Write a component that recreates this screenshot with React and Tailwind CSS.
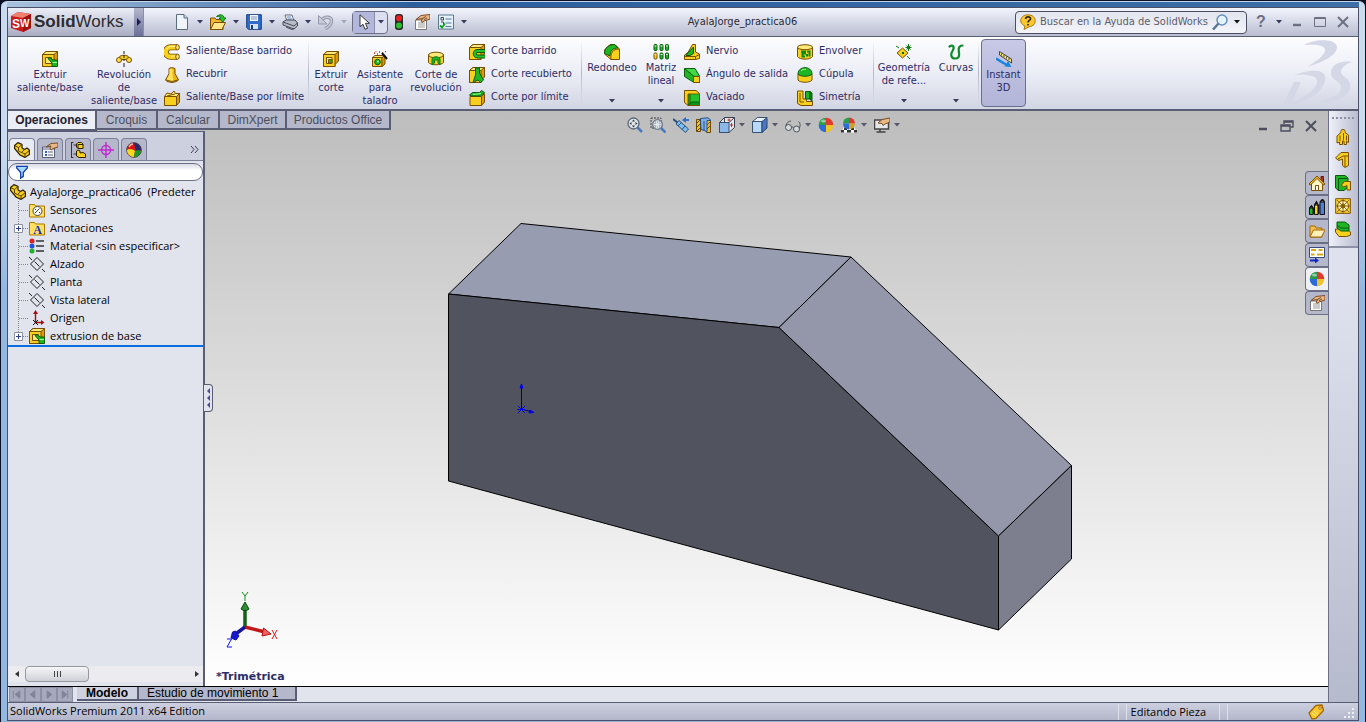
import React, { useState } from "react";

const OUT = "#7a4e00";
const YEL = "#f7cf1d";
const GRN = "#1fb524";

const Svg = ({ size = 16, box = 16, children, ...rest }) => (
  <svg width={size} height={size} viewBox={`0 0 ${box} ${box}`} fill="none" className="shrink-0" aria-hidden="true" {...rest}>
    {children}
  </svg>
);

/* yellow block used as the base of most feature icons */
const Block = () => (
  <>
    <path d="M.5 3.500 4 .5h11.500v9.500l-3.500 3.500V15.500H.5z" fill="#d99b08" stroke={OUT} />
    <path d="M.5 3.500 4 .5h11.500L12 3.500z" fill="#ffe978" stroke={OUT} />
    <path d="M.5 3.500h11.500v12H.5z" fill={YEL} stroke={OUT} />
  </>
);

const icons = {
  extrude: (
    <Svg>
      <Block />
      <path d="M3.500 6.500h6v6h-6z" fill="#ffe978" stroke={OUT} />
      <path d="m6 7.500 2-1 3 2.500h4.500v6.500H10V12z" fill={GRN} stroke="#0b5a10" />
      <path d="M10.500 11.500h4.500" stroke="#9dff90" />
    </Svg>
  ),
  revolve: (
    <Svg>
      <path d="M8 0v3M8 12v4" stroke="#222" />
      <path d="M3 6.500c1-3 9-3 10 0l-1 3c-1-1.500-7-1.500-8 0z" fill={YEL} stroke={OUT} />
      <circle cx="3" cy="9" r="2.500" fill="#ffdf50" stroke={OUT} />
      <circle cx="13" cy="9" r="2.500" fill="#ffdf50" stroke={OUT} />
      <path d="M8 4v6" stroke="#222" strokeDasharray="3 1" />
    </Svg>
  ),
  sweep: (
    <Svg>
      <path d="M13 3.300H6.500a4.700 4.700 0 0 0 0 9.400H13" stroke={OUT} strokeWidth="6" />
      <path d="M13 3.300H6.500a4.700 4.700 0 0 0 0 9.400H13" stroke={YEL} strokeWidth="4.400" />
      <path d="M12 2.500H6.500a5.500 5.500 0 0 0-4 2.500M7 12h5" stroke="#fff3a0" />
      <ellipse cx="13.500" cy="3.300" rx="1.800" ry="2.600" fill="#ffe978" stroke={OUT} />
      <ellipse cx="13.500" cy="12.700" rx="1.800" ry="2.600" fill="#ffe978" stroke={OUT} />
    </Svg>
  ),
  loft: (
    <Svg>
      <path d="M5 1.500 7.500.5 11 1.500v5l3.500 6.500-2 1.500-4.500 1-5-1L1.500 13 5 6.500z" fill="#e9b60f" stroke={OUT} />
      <path d="M5.500 2h3v5l1 7.500L3 13.500 2.500 13 5.500 7z" fill="#ffe25a" />
      <path d="m2 13 6 1.500 6-1.500" stroke={OUT} />
    </Svg>
  ),
  boundary: (
    <Svg>
      <path d="M.5 6.500h12v9H.5z" fill={YEL} stroke={OUT} />
      <path d="m12.500 6.500 3-3v8.500l-3 3.500z" fill="#d99b08" stroke={OUT} />
      <path d="M.5 6.500 3 3l4 1 3-3 1.500 2.500h4l-3 3z" fill="#ffe978" stroke={OUT} />
      <path d="m3 6 8-2" stroke={OUT} />
    </Svg>
  ),
  cutExtrude: (
    <Svg>
      <Block />
      <path d="M3.500 6.500h5.500v6H3.500z" fill="#fff0a0" stroke={OUT} />
      <path d="M5.500 8.500H9v3.500H5.500z" fill={GRN} stroke={OUT} />
    </Svg>
  ),
  hole: (
    <Svg>
      <path d="M.5 6.500h9.500v9H.5z" fill={YEL} stroke={OUT} />
      <path d="m10 6.500 3-2V13l-3 2.500z" fill="#d99b08" stroke={OUT} />
      <path d="m.5 6.500 2.500-2h10l-3 2z" fill="#ffe978" stroke={OUT} />
      <circle cx="5.500" cy="11" r="2.800" fill={GRN} stroke="#0b5a10" />
      <circle cx="6" cy="10.500" r="1" fill="#b8ffb0" />
      <path d="M2 2h1M5 3h1M7 1h1M10 2h1M13 .5h1M3.500 0h1" stroke="#e02010" strokeWidth="1.500" />
      <path d="m10 2 5 6" stroke="#111" strokeWidth="2" />
    </Svg>
  ),
  cutRevolve: (
    <Svg>
      <path d="M.5 4v7.500c2 3 13 3 15 0V4z" fill={YEL} stroke={OUT} />
      <ellipse cx="8" cy="4" rx="7.500" ry="2.800" fill="#ffe978" stroke={OUT} />
      <path d="M4 14V8c1-3 7-3 8 0v6l-2-2V9H6.500v3z" fill={GRN} stroke="#0b7a10" />
    </Svg>
  ),
  cutSweep: (
    <Svg>
      <Block />
      <path d="M16 7H8.500a2.700 2.700 0 0 0 0 5.500H16" stroke="#0b5a10" strokeWidth="4" />
      <path d="M16 7H8.500a2.700 2.700 0 0 0 0 5.500H16" stroke="#25c02a" strokeWidth="2" />
    </Svg>
  ),
  cutLoft: (
    <Svg>
      <Block />
      <path d="M6.500 1h4v5l4 7-3 2.500L9 13l-5 2.500L6.500 8z" fill={GRN} stroke="#0b5a10" />
    </Svg>
  ),
  cutBoundary: (
    <Svg>
      <path d="M1 6.500h11.500v9H1z" fill={YEL} stroke={OUT} />
      <path d="m12.500 6.500 3-3v8.500l-3 3.500z" fill="#d99b08" stroke={OUT} />
      <path d="m.5 5 3-2.500h7l2-2 3 2-4 3.500h-9z" fill={GRN} stroke="#0b5a10" />
      <path d="m4 4.500 8-1" stroke="#9dff90" />
    </Svg>
  ),
  fillet: (
    <Svg>
      <path d="M.5 6 6 .5h5l4.500 4.500v10.500H7L.5 10z" fill={YEL} stroke={OUT} />
      <path d="M.5 9.500C.5 4 5 .5 10.500.5l3.500 3.500C8.500 4 6 7 6 12z" fill={GRN} stroke="#0b5a10" />
      <path d="M7 15.500C6 9 9 5 15 5" stroke={OUT} />
    </Svg>
  ),
  pattern: (
    <Svg>
      {[2.5, 8.5, 14].map((x) =>
        [3.5, 12].map((y) => (
          <g key={x + "-" + y}>
            <rect x={x - 1.5} y={y - 3} width="3" height="6" rx="1" fill={x < 3 && y > 5 ? YEL : GRN} stroke={x < 3 && y > 5 ? OUT : "#0b5a10"} />
            <path d={`M${x - 1} ${y - 1.5}h2`} stroke="#d8ffd0" />
          </g>
        ))
      )}
    </Svg>
  ),
  rib: (
    <Svg>
      <path d="M8.500.5h3V8l4 2v4.500l-4 1H.5V11L4 8.500z" fill={YEL} stroke={OUT} />
      <path d="M9.500 3v6.500L6 11.500H2L4.500 8z" fill={GRN} stroke="#0b5a10" />
      <path d="M1 12.500h10.500l4-2M11.500 12.500v3" stroke={OUT} />
    </Svg>
  ),
  draft: (
    <Svg>
      <path d="M.5 1.500H11L15.500 9v6.500H10L.5 9.500z" fill={GRN} stroke="#0b5a10" />
      <path d="M1 2 10 9.500" stroke="#0b5a10" />
      <path d="M2 2h8.500l4 6.500H10z" fill="#46d848" />
      <path d="M9.500 9.500h6v6h-6z" fill={YEL} stroke={OUT} />
    </Svg>
  ),
  shell: (
    <Svg>
      <path d="M.5.5h11.500l3.500 3v12H4l-3.500-3z" fill={YEL} stroke={OUT} />
      <path d="M4 4h11.500v11.500H4z" fill="#0d9616" stroke={OUT} />
      <path d="M7 4.500h8V12H7z" fill="#27c22c" />
      <path d="m4.500 15 3-3H15" stroke="#0b5a10" />
    </Svg>
  ),
  wrap: (
    <Svg>
      <path d="M.5 3.500v9c2 3.500 13 3.500 15 0v-9z" fill={YEL} stroke={OUT} />
      <ellipse cx="8" cy="3.200" rx="7.500" ry="2.500" fill="#ffe978" stroke={OUT} />
      <path d="M4 7.500h4v2H5.500v3H8m2-5h2.500v5M10 10v2.500" stroke="#0d8a16" strokeWidth="2" />
    </Svg>
  ),
  dome: (
    <Svg>
      <path d="M1 7v6c2 3 12 3 14 0V7z" fill={YEL} stroke={OUT} />
      <path d="M1 7c0-8.500 14-8.500 14 0-2 3-12 3-14 0z" fill={GRN} stroke="#0b5a10" />
      <path d="M4 4c1-1.500 3-2 5-1.500" stroke="#9dff90" />
    </Svg>
  ),
  mirror: (
    <Svg>
      <path d="M.5 1H6v8h3.500v2.500h6v4H4l-3.500-2z" fill={YEL} stroke={OUT} />
      <path d="M3 3v9h4" stroke={OUT} />
      <path d="M8.500 1.500H13V9H8.500z" fill={GRN} stroke="#0b5a10" />
      <path d="M13 1.500 15 3v8.500L13 9z" fill="#0c8a14" stroke="#0b5a10" />
    </Svg>
  ),
  refGeo: (
    <Svg>
      <path d="m1 9 5.500-5L12 9l-5.500 5z" fill={YEL} stroke={OUT} />
      <path d="M6 8h2v2H6z" fill="#0b6a10" />
      <path d="m0 2 3 2M11 12l3 3M12.500 0v7M9.500 3.500h6M10.500 1.500l4 4M14.500 1.500l-4 4" stroke="#0b7a10" />
    </Svg>
  ),
  curves: (
    <Svg>
      <path d="M1.500 2.500C5 .5 7 3 4.500 7S3.500 14.500 7 14.500s4.500-2 4-5.500S10 2 14.500 1.500" stroke="#0c8a2c" strokeWidth="2.200" strokeLinecap="round" />
    </Svg>
  ),
  instant: (
    <Svg>
      <path d="M3.500.5 15.500 8v4L3.500 4z" fill="#f8e878" stroke="#444" />
      <path d="M5.500 2.500v2M8 4v2M10.500 5.500v2M13 7v2" stroke="#444" />
      <path d="m0 7.500 10 6" stroke="#1585e0" strokeWidth="2.500" />
      <path d="M15.500 16 8.500 15.500 12 10z" fill="#1585e0" />
    </Svg>
  ),
  part: (
    <Svg>
      <path d="M.6 3.500 4 .6 8 2.500V6l2.500 1.500L13 6l2.400 2v4.500L11 15.400 6 13 .6 6.500z" fill={YEL} stroke="#2c2000" strokeWidth="1.200" />
      <path d="M.6 3.500 4.500 5.500 8 2.500M4.500 5.500v3.500l3 1.500L10.500 7.500M7.500 10.500l3.500 1.500v3M11 12l4.400-3.500" stroke="#5a4000" />
    </Svg>
  ),
  props: (
    <Svg>
      <path d="M1.500 6h11v9.500h-11z" fill="#fcfcfc" stroke="#777" />
      <path d="M4 9h7M4 11h7M4 13h7" stroke="#999" />
      <path d="M2 5.500 7 1.500l9-1V5l-6 2-2 1.500L7 7l2-2.500z" fill="#e8b887" stroke="#7c4c24" />
      <path d="m9 4 3-1.500M10 5.500 13 4" stroke="#7c4c24" />
    </Svg>
  ),
  propTab: (
    <Svg>
      <path d="M.5 5h12v10.500H.5z" fill="#f6f8fc" stroke="#555e78" />
      <path d="M1 6h11v2H1z" fill="#a8b0c8" />
      <path d="M3 10h2M3 13h2" stroke="#2b62c8" strokeWidth="2" />
      <path d="M6 10h5M6 13h5" stroke="#666" />
      <path d="M4 5 9 1.500l7-.5v4l-5 1.500-2 1.500-1-2 1-2z" fill="#e8b887" stroke="#7c4c24" />
    </Svg>
  ),
  config: (
    <Svg>
      <path d="M1.500 0v16M3.500 3h3M3.500 12h3M1.500 .5h2M1.500 15.500h2" stroke="#333" />
      <path d="m6.500 2 1.500-1.500h3.500L13 2v4.500H8L6.500 5z" fill={YEL} stroke="#2c2000" />
      <path d="M8 2.500h5M8 2.500v4" stroke="#2c2000" />
      <path d="m6.500 9 1.500-1 2 1v2l3-.5 2.500 1.500v3.500H9l-2.500-1.500z" fill={YEL} stroke="#2c2000" />
    </Svg>
  ),
  dim: (
    <Svg>
      <circle cx="8" cy="8" r="4.500" stroke="#c02ad0" strokeWidth="1.400" />
      <path d="M8 0v16M0 8h16" stroke="#c02ad0" strokeWidth="1.400" />
    </Svg>
  ),
  displayBall: (
    <Svg>
      <circle cx="8" cy="8" r="7.300" fill="#d81414" stroke="#444" />
      <path d="M8 1a7 7 0 0 1 7 7l-5 1z" fill="#222a70" />
      <path d="M1 8c2-2 6-1 8 1l-1 6C4 15 1 12 1 8z" fill="#f8d820" />
      <path d="M9 9c2-1 4-1 6 0-1 4-4 6-7 6z" fill="#159a30" />
      <path d="M3 5c1-2 2-3 4-3" stroke="#ffb0a0" strokeWidth="1.500" />
    </Svg>
  ),
  ball: (
    <Svg>
      <path d="M8 8V.7A7.300 7.300 0 0 1 15.300 8z" fill="#e03a2c" />
      <path d="M8 8H.7A7.300 7.300 0 0 1 8 .7z" fill="#2a9c4c" />
      <path d="M8 8v7.300A7.300 7.300 0 0 1 .7 8z" fill="#2c6cd8" />
      <path d="M8 8h7.300A7.300 7.300 0 0 1 8 15.300z" fill="#f0c428" />
      <ellipse cx="5.500" cy="4" rx="2.500" ry="1.600" fill="#fff" opacity=".5" />
    </Svg>
  ),
  scene: (
    <Svg>
      <path d="M0 15.500h16L13 10H3z" fill="#fff" />
      <path d="M0 13h3v2.500H0zM6 13h4v2.500H6zM13 13h3v2.500h-3zM3 10.500h3V13H3zM10 10.500h3V13h-3z" fill="#333" />
      <path d="M8 6.500V.5a6 6 0 0 1 6 6z" fill="#e03a2c" />
      <path d="M8 6.500H2a6 6 0 0 1 6-6z" fill="#2a9c4c" />
      <path d="M8 6.500v6a6 6 0 0 1-6-6z" fill="#2c6cd8" />
      <path d="M8 6.500h6a6 6 0 0 1-6 6z" fill="#d0a428" />
    </Svg>
  ),
  filter: (
    <Svg size={14}>
      <path d="M2 1.500h12v2L9.500 8.500V13L6.500 15V8.500L2 3.500z" fill="#a8d8fc" stroke="#1240b0" strokeWidth="1.500" />
    </Svg>
  ),
  sensors: (
    <Svg>
      <path d="M.5 2.500h5l1 1.500h9v11H.5z" fill="#ffe060" stroke="#b07a00" />
      <circle cx="8.500" cy="9" r="4.500" fill="#fff" stroke="#444" />
      <path d="m6 11 4.500-4.500M6 8l1-1M10 11l1-1" stroke="#333" />
    </Svg>
  ),
  notes: (
    <Svg>
      <path d="M.5 2.500h5l1 1.500h9v11H.5z" fill="#ffe060" stroke="#b07a00" />
      <text x="8.500" y="14" textAnchor="middle" fontSize="12" fontWeight="700" fontFamily="Liberation Serif, serif" fill="#1230c0">A</text>
    </Svg>
  ),
  material: (
    <Svg>
      <circle cx="3" cy="3" r="2.500" fill="#e02020" />
      <circle cx="3" cy="8" r="2.500" fill="#2050e0" />
      <circle cx="3" cy="13" r="2.500" fill="#20b030" />
      <path d="M7 3h8M7 8h8M7 13h8" stroke="#333" strokeWidth="1.500" />
    </Svg>
  ),
  plane: (
    <Svg>
      <path d="M8 1.500 14.500 8 8 14.500 1.500 8zM0 1l3 3M13 13l3 3M5.500 5.500l5 5" stroke="#222" />
    </Svg>
  ),
  origin: (
    <Svg>
      <path d="M6.500 2v11M6 12.500h8" stroke="#a01010" strokeWidth="1.400" />
      <path d="m6.500 0 2.500 4H4zM15.500 12.500 12 10v5z" fill="#a01010" />
      <path d="m4 10 5 5M9 10l-5 5" stroke="#111" />
    </Svg>
  ),
  newDoc: (
    <Svg>
      <path d="M2.500.5h7.500l3.500 3.500v11.500h-11z" fill="#eef4fa" stroke="#5c6c80" />
      <path d="M10 .5V4h3.500" fill="#c8d4e0" stroke="#5c6c80" />
    </Svg>
  ),
  open: (
    <Svg>
      <path d="M.5 4h4.500l1 1.500h7v10H.5z" fill="#f0b830" stroke={OUT} />
      <path d="M.5 15.500 4 8.500h11.500L12 15.500z" fill="#ffe488" stroke={OUT} />
      <path d="M6.500 2.500C10-.5 14 1 14 4h2l-3.500 4L9 4h2c0-1.500-2-2-4.500-1.500z" fill="#2fc02f" stroke="#0b7a10" />
    </Svg>
  ),
  save: (
    <Svg>
      <path d="M.7.7h14.600v14.600H2.500L.7 13.500z" fill="#2e6cc8" stroke="#153c80" />
      <path d="M4 1h8v6H4z" fill="#f4f8fc" />
      <path d="M5 3h6M5 5h6" stroke="#7a94b8" />
      <path d="M4 10h8v5H4z" fill="#d8e0ec" />
      <path d="M5 11h2v4H5z" fill="#153c80" />
    </Svg>
  ),
  print: (
    <Svg>
      <path d="M3 1h7l2 6H5z" fill="#fff" stroke="#667" />
      <path d="M5 3h4M5.500 5H10" stroke="#5580c0" />
      <path d="m1 8 3-2h9l2.500 3v3L12 15l-11-4z" fill="#b8bcc8" stroke="#444a58" />
      <path d="m1 8 11 4 3.500-3M4 13l6 2.500 2-1" stroke="#444a58" />
    </Svg>
  ),
  undo: (
    <Svg>
      <path d="M2 7.500C7 1 14 2.500 13.500 7.500 13 11 10.500 13 7 15" stroke="#9498a8" strokeWidth="3.500" />
      <path d="M2 7.500C7 1 14 2.500 13.500 7.500 13 11 10.500 13 7 15" stroke="#c8ccd8" strokeWidth="1.500" />
      <path d="M.5 1.500v8.500H9z" fill="#c8ccd8" stroke="#9498a8" />
    </Svg>
  ),
  pointer: (
    <Svg>
      <path d="M4 .8v12l3-2.500 2 5 2.500-1-2-5h4z" fill="#fff" stroke="#333" />
    </Svg>
  ),
  traffic: (
    <Svg>
      <rect x="4" y="0" width="8" height="16" rx="3" fill="#2a2a2a" />
      <circle cx="8" cy="4.300" r="3" fill="#e82020" />
      <circle cx="8" cy="11.500" r="3" fill="#28c028" />
    </Svg>
  ),
  options: (
    <Svg>
      <path d="M.5 1h15v14H.5z" fill="#e4f2f8" stroke="#5c7890" />
      <path d="M3 3.500h2.500v2.500H3zM3 8h2.500v2.500" stroke="#445" />
      <path d="M7.500 5h6M7.500 9h6M7.500 12.500h6" stroke="#5577a0" />
      <path d="m2 11.500 2 2 3-4" stroke="#10a020" strokeWidth="1.800" />
    </Svg>
  ),
  help: (
    <Svg>
      <path d="M8 .8c9 0 10 11 1 12l-5 2.700 1-3.500C-2 9 0 .8 8 .8z" fill="#f8c830" stroke="#a87808" />
      <path d="M5.500 5c.5-3 5.500-2.500 5 0-.5 1.500-2.500 1.500-2.500 3.500M8 10v1.500" stroke="#3a2800" strokeWidth="1.700" />
    </Svg>
  ),
  search: (
    <Svg>
      <circle cx="10" cy="6" r="5" fill="#e4f4fc" stroke="#6890b8" strokeWidth="1.500" />
      <path d="m6.500 9.500-5.500 6" stroke="#587898" strokeWidth="2.500" />
    </Svg>
  ),
  zoomFit: (
    <Svg>
      <circle cx="6.500" cy="6.500" r="5.500" fill="#dde4ea" stroke="#5b6676" strokeWidth="1.300" />
      <path d="M6.500 2.500 8 4.500H5zM6.500 10.500 8 8.500H5zM2.500 6.500 4.500 5v3zM10.500 6.500 8.500 5v3z" fill="#333" />
      <path d="m10.500 10.500 4.500 4.500" stroke="#4a78b8" strokeWidth="2.500" />
    </Svg>
  ),
  zoomArea: (
    <Svg>
      <path d="M1 1h10v10H1z" stroke="#444" strokeDasharray="2 1" />
      <circle cx="7.500" cy="7.500" r="4.800" fill="#dde4ea" stroke="#6b7686" strokeWidth="1.300" />
      <path d="M5 5h5v5H5z" stroke="#888" strokeDasharray="1 1" />
      <path d="m11 11 4.500 4.500" stroke="#4a78b8" strokeWidth="2.500" />
    </Svg>
  ),
  prevView: (
    <Svg>
      <path d="M3 7 6 3.500l9.500 8.500-3 3.500z" fill="#7fbcf0" stroke="#2a5080" />
      <path d="m5 9 3.500-3.500M9 12.500l3-3.500" stroke="#2a5080" />
      <path d="M16 3H11" stroke="#2e6cc8" strokeWidth="1.800" />
      <path d="m9 3 4-3v6z" fill="#2e6cc8" />
      <path d="m0 2 4.500 3.500" stroke="#2a5080" strokeWidth="2" />
    </Svg>
  ),
  section: (
    <Svg>
      <path d="M.5 2.500h4v12h-4zM10.500 3.500h4v12h-4z" fill="#f0c020" stroke="#6a4800" />
      <path d="M4.500 1.500 12 .8l3 2.700h-4v11l-6-2z" fill="#7fb0ea" stroke="#2a5080" />
      <path d="M8 4v9" stroke="#2a5080" />
      <path d="m1 6 3-3M1 10l3-3M1 14l3-3M11 8l3-3M11 12l3-3" stroke="#6a4800" />
    </Svg>
  ),
  orient: (
    <Svg>
      <path d="m.5 5.500 5-5h10v10l-5.500 5H.5z" fill="#e4e6ea" stroke="#3a4050" />
      <path d="M.5 5.500h9.500v10H.5z" fill="#8cb8e8" stroke="#3a5070" />
      <path d="M10 5.500l5.500-5M5.500 1v4" stroke="#3a4050" />
      <path d="M8.500 3h3M10 1.500v3M12.500 6v4M11 8h3" stroke="#c03030" />
    </Svg>
  ),
  style: (
    <Svg>
      <path d="M.5 4.500H10v11H.5z" fill="#b8d8f8" stroke="#3a5070" />
      <path d="m10 4.500 5-4v10.500l-5 4.500z" fill="#4a78c0" stroke="#2a4070" />
      <path d="m.5 4.500 5-4H15l-5 4z" fill="#e8f2fc" stroke="#3a5070" />
    </Svg>
  ),
  glasses: (
    <Svg>
      <circle cx="3.500" cy="10.500" r="3" fill="#d4dade" stroke="#4c545c" />
      <circle cx="11.500" cy="12" r="3" fill="#d4dade" stroke="#4c545c" />
      <path d="M6.500 10.500c1-1 1.500-.5 2 .5M1 9c0-3 3-5 5-5M14.500 11c1-3 1-5-1-6.500" stroke="#4c545c" />
    </Svg>
  ),
  display: (
    <Svg>
      <path d="M.5 3h14v9H.5z" fill="#e4e6ea" stroke="#444" strokeWidth="1.500" />
      <path d="M6 12v2.500M2.500 15h9" stroke="#444" strokeWidth="1.500" />
      <path d="M4 6 8 2.500 16 1v4l-5 2-2 1.500-1-2z" fill="#e8b887" stroke="#7c4c24" />
    </Svg>
  ),
  home: (
    <Svg>
      <path d="M12 1.500h2.500V7H12z" fill="#b03020" stroke="#701808" />
      <path d="M2.500 8v7.500h11V8L8 2.500z" fill="#fff4c8" stroke={OUT} />
      <path d="m0 9 8-8 8 8-1.500 1L8 3.500 1.500 10z" fill="#f4b820" stroke={OUT} />
      <path d="M6.500 10.500h3v5h-3z" fill="#fff" stroke={OUT} />
    </Svg>
  ),
  library: (
    <Svg>
      <path d="M.5 9h3.500v6.500H.5z" fill={GRN} stroke="#111" />
      <path d="M5.500 6H9v9.500H5.500z" fill={YEL} stroke="#111" />
      <path d="M11 3h4.500v12.500H11z" fill="#4a80e0" stroke="#111" />
      <path d="m.5 9 2-2 1.500 2M5.500 6l2-3L9 6M11 3l2.500-2.500 2 2.500" stroke="#111" strokeWidth="1.500" />
      <path d="M4 9l1-1v7l-1 .5zM9 6l1.500-1v9.500L9 15.500z" fill="#111" />
    </Svg>
  ),
  folder: (
    <Svg>
      <path d="M1 3h5l1 2h6v9H1z" fill="#f4c050" stroke="#a06808" />
      <path d="M1 14 4.500 7h11.500L12.500 14z" fill="#fff0b8" stroke="#a06808" />
    </Svg>
  ),
  palette: (
    <Svg>
      <path d="M.5.5h15v10H.5z" fill="#fff" stroke="#3a4a80" />
      <path d="M2 3h5M9.500 3h4M2 7.500h3.500M8 7.500h6" stroke="#d8a810" strokeWidth="2" />
      <path d="M1 13.500h6" stroke="#1028c0" strokeWidth="2" />
      <path d="m6 10.500 4 3-4 3z" fill="#1028c0" />
    </Svg>
  ),
  ext1: (
    <Svg>
      <path d="M8 .5c2 0 2.500 1.500 2 3L13.500 6v7.500l-2-1v3H9V12H7.500v3.500H4.500V13L2 14V7L6 3.500c-.5-1.500 0-3 2-3z" fill={YEL} stroke={OUT} />
      <path d="M8.500 4v7M5 6.500v5.500M11.500 6.500v5" stroke={OUT} />
    </Svg>
  ),
  ext2: (
    <Svg>
      <path d="M.5 6 6 .5h7.500v13l-3.500 2-2.500-2V7L4 8.500z" fill={YEL} stroke={OUT} />
      <path d="M3 7 8 4h5M10 4.500v10.500" stroke={OUT} />
    </Svg>
  ),
  ext3: (
    <Svg>
      <path d="M.5.5h9.500l3 2.500v9L9 15.500H3.500l-3-2.500z" fill={GRN} stroke="#0b5a10" />
      <path d="M3.500 3.500v12M3.500 3.500h9" stroke="#0b5a10" />
      <path d="m6.500 10 3-3.500h6v8.500h-3.500V10.500l-3.500 1.500z" fill={YEL} stroke={OUT} />
    </Svg>
  ),
  ext4: (
    <Svg>
      <path d="M.7.700h14.600v14.600H.7z" fill="#ffd830" stroke={OUT} />
      <circle cx="8" cy="8" r="5.500" fill="#fff4b0" stroke={OUT} />
      <circle cx="8" cy="8" r="2" fill={YEL} stroke={OUT} />
      <path d="M8 1v14M1 8h14M2 2l12 12M14 2 2 14" stroke={OUT} strokeWidth=".8" />
    </Svg>
  ),
  ext5: (
    <Svg>
      <path d="M.5 8h11l4 3v3l-4 1.500H4L.5 11z" fill={YEL} stroke={OUT} />
      <path d="M2 1h8l4 3v6H6L2 7z" fill={GRN} stroke="#0b5a10" />
      <path d="M2 4.500 6 7h8" stroke="#0b5a10" />
    </Svg>
  ),
  tag: (
    <Svg>
      <path d="m1 9 7-7.500 6-.5 1.500 5.500L8 14.500l-4 .5z" fill="#f8c828" stroke="#a86800" strokeWidth="1.300" />
      <circle cx="12" cy="4" r="1.300" fill="#fff" stroke="#a86800" />
      <path d="m4 9 4 3.500M6 7l4 3.500" stroke="#fff3a0" />
    </Svg>
  ),
};

const Caret = ({ color = "#3a3a5c" }) => (
  <svg width="6" height="4" viewBox="0 0 6 4" className="shrink-0" aria-hidden="true">
    <path d="M0 0h6L3 3.500z" fill={color} />
  </svg>
);

const BigButton = ({ icon, lines, className, menu, pressed }) => (
  <button type="button" className={`flex flex-col items-center text-center leading-[13px] ${menu ? "pt-[7px] pb-1.5" : pressed ? "pt-[11px]" : "pt-[14px]"} ${className}`}>
    {icons[icon]}
    {lines.map((line) => (
      <span key={line} className="whitespace-nowrap first-of-type:mt-px">{line}</span>
    ))}
    {menu && <span className="mt-auto"><Caret /></span>}
  </button>
);

const ButtonList = ({ items, className }) => (
  <div className={`flex flex-col pt-[3px] ${className}`}>
    {items.map(([icon, label]) => (
      <button key={label} type="button" className="flex h-[23px] items-center gap-1.5 whitespace-nowrap text-left">
        {icons[icon]}
        {label}
      </button>
    ))}
  </div>
);

const Divider = () => <div className="my-1 w-px bg-linear-to-b from-transparent via-[#b4b8ca] to-transparent" />;

const WinIcon = ({ type, color = "#6d7083" }) => (
  <Svg size={14} box={14}>
    {type === "min" && <path d="M3 10h8" stroke={color} strokeWidth="2.500" />}
    {type === "max" && <path d="M1.500 2.500h11v9h-11zM1 3.500h12" stroke={color} />}
    {type === "restore" && <path d="M4 5V2h9v6h-3M4 3h9M1 6h9v6H1zM1 7h9" stroke={color} strokeWidth="1.400" />}
    {type === "close" && <path d="m2 2 10 10M12 2 2 12" stroke={color} strokeWidth="2" />}
  </Svg>
);

function TitleBar() {
  const files = ["newDoc", "open", "save", "print", "undo"];
  return (
    <header className="flex h-[29px] items-center border-b border-[#5a5e74] bg-linear-to-b from-[#f3f5fd] to-[#b9bdd0]">
      <div className="flex w-[126px] items-center gap-0.5 self-stretch bg-linear-to-b from-[#eceef7] to-[#a9adc1] pl-0.5">
        <svg width="22" height="22" viewBox="0 0 22 22" aria-hidden="true">
          <path d="M1 5 8 1l13 2v14l-8 4L1 17z" fill="#c81c1c" />
          <path d="M1 5 8 1l13 2-8 4z" fill="#f08070" />
          <path d="m13 7 8-4v14l-8 4z" fill="#a01010" />
          <text x="2" y="17" fontSize="12" fontWeight="700" fontFamily="Liberation Sans, sans-serif" fill="#fff">S</text>
          <text x="10" y="16" fontSize="10" fontWeight="700" fontFamily="Liberation Sans, sans-serif" fill="#fff">W</text>
        </svg>
        <span className="font-['Liberation_Sans',sans-serif] text-[17px] text-[#2c2c30]">
          <b>Solid</b>Works
        </span>
      </div>
      <button type="button" aria-label="Menú" className="flex w-[10px] items-center justify-center self-stretch border-r border-[#8a8ea6] bg-linear-to-b from-[#b4b7cc] to-[#6c7098]">
        <svg width="4" height="8" viewBox="0 0 4 8" aria-hidden="true"><path d="M0 0v8l4-4z" fill="#1c1c50" /></svg>
      </button>
      <div className="flex items-center pl-7">
        {files.map((name) => (
          <div key={name} className="flex items-center">
            <button type="button" aria-label={name} className="flex w-5 justify-center">{icons[name]}</button>
            <button type="button" aria-label={`${name} menu`} className="flex w-4 justify-center">
              <Caret color={name === "undo" ? "#a4a8b8" : undefined} />
            </button>
          </div>
        ))}
        <div className="flex h-[23px] w-9 items-stretch rounded border border-[#6c6f88] bg-[#dcdff0]">
          <button type="button" aria-label="Seleccionar" className="flex w-[22px] items-center justify-center border-r border-[#8a8ea6] bg-[#b4b7dc]">{icons.pointer}</button>
          <button type="button" aria-label="Seleccionar menu" className="flex flex-1 items-center justify-center"><Caret /></button>
        </div>
        <button type="button" aria-label="Reconstruir" className="flex w-[22px] justify-center">{icons.traffic}</button>
        <button type="button" aria-label="Propiedades" className="flex w-6 justify-center">{icons.props}</button>
        <button type="button" aria-label="Opciones" className="flex w-6 justify-center">{icons.options}</button>
        <button type="button" aria-label="Opciones menu" className="flex w-3 justify-center"><Caret /></button>
      </div>
      <h1 className="flex-1 text-center text-[#2a2a34]">AyalaJorge_practica06</h1>
      <div className="flex h-[23px] w-[232px] items-center gap-1 rounded border border-[#4c4f60] bg-linear-to-b from-[#e2e4ee] to-[#f4f5fa] pr-1 pl-1">
        {icons.help}
        <input type="text" aria-label="Buscar" placeholder="Buscar en la Ayuda de SolidWorks" className="min-w-0 flex-1 bg-transparent outline-none placeholder:text-[#5c5e6c]" />
        <button type="button" aria-label="Buscar ayuda">{icons.search}</button>
        <button type="button" aria-label="Buscar menu" className="px-0.5"><Caret color="#111" /></button>
      </div>
      <button type="button" className="ml-0.5 w-6 font-['Liberation_Sans',sans-serif] text-base font-bold text-[#6d7083]">?</button>
      <button type="button" aria-label="Ayuda menu" className="flex w-3 justify-center"><Caret /></button>
      <button type="button" aria-label="Minimizar" className="flex w-[23px] justify-center"><WinIcon type="min" /></button>
      <button type="button" aria-label="Maximizar" className="flex w-[23px] justify-center"><WinIcon type="max" /></button>
      <button type="button" aria-label="Cerrar" className="mr-1 flex w-[23px] justify-center"><WinIcon type="close" /></button>
    </header>
  );
}

function Ribbon() {
  return (
    <div className="flex h-[74px] border-b-2 border-[#5a5e74] bg-linear-to-b from-[#fdfdff] via-[#eceef6] to-[#d2d5e3] text-[#2c2c66]">
      <BigButton icon="extrude" lines={["Extruir", "saliente/base"]} className="w-[84px]" />
      <BigButton icon="revolve" lines={["Revolución", "de", "saliente/base"]} className="w-16" />
      <ButtonList className="w-[152px] pl-2" items={[["sweep", "Saliente/Base barrido"], ["loft", "Recubrir"], ["boundary", "Saliente/Base por límite"]]} />
      <Divider />
      <BigButton icon="cutExtrude" lines={["Extruir", "corte"]} className="w-11" />
      <BigButton icon="hole" lines={["Asistente", "para", "taladro"]} className="w-[54px]" />
      <BigButton icon="cutRevolve" lines={["Corte de", "revolución"]} className="w-[58px]" />
      <ButtonList className="w-[116px] pl-1" items={[["cutSweep", "Corte barrido"], ["cutLoft", "Corte recubierto"], ["cutBoundary", "Corte por límite"]]} />
      <Divider />
      <BigButton icon="fillet" lines={["Redondeo"]} className="w-[60px]" menu />
      <BigButton icon="pattern" lines={["Matriz", "lineal"]} className="w-[38px]" menu />
      <ButtonList className="w-[113px] pl-1" items={[["rib", "Nervio"], ["draft", "Ángulo de salida"], ["shell", "Vaciado"]]} />
      <ButtonList className="w-20 pl-1" items={[["wrap", "Envolver"], ["dome", "Cúpula"], ["mirror", "Simetría"]]} />
      <Divider />
      <BigButton icon="refGeo" lines={["Geometría", "de refe..."]} className="w-[60px]" menu />
      <BigButton icon="curves" lines={["Curvas"]} className="w-11" menu />
      <Divider />
      <div className="ml-0.5 flex py-0.5">
        <BigButton icon="instant" lines={["Instant", "3D"]} className="w-[45px] rounded border border-[#6c6f88] bg-linear-to-b from-[#c8c9e6] to-[#b2b4d8]" pressed />
      </div>
      <svg width="76" height="70" viewBox="0 0 76 70" fill="none" className="ml-auto" aria-hidden="true">
        <path d="M22 8c10-6 32-7 33 2 0 8-13 15-30 20 10-6 18-12 18-17 0-5-9-6-21-5z" fill="#d3d7e6" />
        <path d="M12 38c22-8 36-5 30 9-5 12-22 20-42 22l12-24h7l-9 20c13-4 23-12 25-19 2-7-8-9-23-8z" fill="#d3d7e6" />
        <path d="M70 25c-13-2-22 4-21 12 1 7 12 8 10 15-2 8-13 10-24 12 14 3 31-2 33-13 2-10-10-11-9-17 1-4 5-7 11-9z" fill="#d3d7e6" />
      </svg>
    </div>
  );
}

const commandTabs = [
  ["Operaciones", "w-[89px]"],
  ["Croquis", "w-[61px]"],
  ["Calcular", "w-[62px]"],
  ["DimXpert", "w-[67px]"],
  ["Productos Office", "w-[104px]"],
];

function CommandTabs() {
  const [active, setActive] = useState("Operaciones");
  return (
    <div className="relative z-10 flex h-5 w-fit font-['Liberation_Sans',sans-serif] text-xs">
      {commandTabs.map(([name, width]) => (
        <button
          key={name}
          type="button"
          onClick={() => setActive(name)}
          className={`whitespace-nowrap ${width} ${active === name ? "border-r-2 border-b-2 border-[#5a5e74] bg-[#eceef5] font-bold text-[#222230]" : "mb-px border-r-2 border-b-2 border-[#5a5e74] bg-[#b5b8ca] text-[#4c4e5e]"}`}
        >
          {name}
        </button>
      ))}
    </div>
  );
}

const treeItems = [
  { icon: "sensors", label: "Sensores" },
  { icon: "notes", label: "Anotaciones", plus: true },
  { icon: "material", label: "Material <sin especificar>" },
  { icon: "plane", label: "Alzado" },
  { icon: "plane", label: "Planta" },
  { icon: "plane", label: "Vista lateral" },
  { icon: "origin", label: "Origen" },
  { icon: "extrude", label: "extrusion de base", plus: true, last: true },
];

const Branch = ({ plus, last }) => (
  <svg width="20" height="18" viewBox="0 0 20 18" fill="none" className="shrink-0" aria-hidden="true">
    <path d={last ? "M9.500 0v9" : "M9.500 0v18"} stroke="#888" strokeDasharray="1 1" />
    <path d="M10 9.500h10" stroke="#888" strokeDasharray="1 1" />
    {plus && <path d="M5.500 5.500h8v8h-8z" fill="#fff" stroke="#8c90a0" />}
    {plus && <path d="M7 9.500h5M9.500 7v5" stroke="#2a3c90" />}
  </svg>
);

function FeatureTree() {
  const [tab, setTab] = useState("part");
  return (
    <aside className="relative flex w-[197px] shrink-0 flex-col border-t border-r-2 border-[#5a5e74] bg-[#e1e4ed] font-['Open_Sans',sans-serif] text-[11px] text-black">
      <div className="flex h-[29px] items-end gap-0.5 border-b border-[#7c8096] bg-[#cdd0df] pl-px">
        {["part", "propTab", "config", "dim", "displayBall"].map((name) => (
          <button
            key={name}
            type="button"
            aria-label={name}
            onClick={() => setTab(name)}
            className={`flex h-[22px] w-[26px] items-center justify-center rounded-t border border-b-0 border-[#7c8096] ${tab === name ? "bg-[#e9ebf3]" : "bg-[#b5b8ca]"}`}
          >
            {icons[name]}
          </button>
        ))}
        <button type="button" aria-label="Más" className="mr-1 mb-1.5 ml-auto">
          <svg width="9" height="9" viewBox="0 0 9 9" fill="none" aria-hidden="true"><path d="m1 1 3 3.500L1 8M5 1l3 3.500L5 8" stroke="#3c3e50" /></svg>
        </button>
      </div>
      <label className="mt-0.5 flex h-[18px] items-center rounded-full border border-[#6c7086] bg-linear-to-b from-[#d8dae4] to-white to-40% pl-1.5">
        {icons.filter}
        <input type="text" aria-label="Filtro" className="min-w-0 flex-1 bg-transparent outline-none" />
      </label>
      <ul className="mt-0.5 border-b-2 border-[#0a6fe0] leading-[18px]">
        <li className="flex h-[18px] items-center gap-1 pl-0.5 whitespace-pre">
          {icons.part}
          {"AyalaJorge_practica06  (Predeter"}
        </li>
        {treeItems.map(({ icon, label, plus, last }) => (
          <li key={label} className="flex h-[18px] items-center pl-px whitespace-nowrap">
            <Branch plus={plus} last={last} />
            {icons[icon]}
            <span className="pl-[5px]">{label}</span>
          </li>
        ))}
      </ul>
      <div className="mt-auto mb-1 flex h-4 items-center bg-[#ececf0]">
        <button type="button" aria-label="Izquierda" className="flex w-[17px] justify-center"><svg width="4" height="6" viewBox="0 0 4 6" aria-hidden="true"><path d="M4 0v6L0 3z" fill="#333" /></svg></button>
        <button type="button" aria-label="Desplazar" className="flex h-4 w-16 items-center justify-center gap-0.5 rounded-sm border border-[#96989e] bg-linear-to-b from-[#f6f6f8] to-[#cfd1d8]">
          <span className="h-1.5 w-px bg-[#444]" />
          <span className="h-1.5 w-px bg-[#444]" />
          <span className="h-1.5 w-px bg-[#444]" />
        </button>
        <button type="button" aria-label="Derecha" className="ml-auto flex w-3 justify-center"><svg width="4" height="6" viewBox="0 0 4 6" aria-hidden="true"><path d="M0 0v6l4-3z" fill="#333" /></svg></button>
      </div>
      <button type="button" aria-label="Contraer panel" className="absolute top-[252px] -right-[10px] flex h-7 w-[9px] flex-col items-center justify-around rounded-r border border-l-0 border-[#5a5e74] bg-[#e1e4ed] py-0.5">
        {[0, 1, 2].map((n) => (
          <svg key={n} width="3" height="6" viewBox="0 0 3 6" aria-hidden="true"><path d="M3 0v6L0 3z" fill="#4a4c98" /></svg>
        ))}
      </button>
    </aside>
  );
}

function ViewToolbar() {
  const tools = [
    ["zoomFit"], ["zoomArea"], ["prevView"], ["section"], ["orient", true], ["style", true],
    ["glasses", true], ["ball"], ["scene", true], ["display", true],
  ];
  return (
    <div className="absolute top-[6px] right-0 left-[197px] flex justify-center pr-1.5">
      {tools.map(([name, menu]) => (
        <div key={name} className="flex items-center">
          <button type="button" aria-label={name} className="flex w-[23px] justify-center">{icons[name]}</button>
          {menu && <button type="button" aria-label={`${name} menu`} className="w-2.5"><Caret color="#55576c" /></button>}
        </div>
      ))}
    </div>
  );
}

const Model = () => (
  <svg viewBox="205 131 1123 555" className="absolute inset-0 h-full w-full" stroke="#000" strokeLinejoin="round" role="img" aria-label="Pieza">
    <path d="m521 223.500 330 33.500-72 70.500-330.500-33.500z" fill="#989cb0" />
    <path d="m448.500 294 330.500 33.500L998.500 536v94L448.500 481z" fill="#51535f" />
    <path d="m851 257 220.500 208.500-73 70.500L779 327.500z" fill="#9397a9" />
    <path d="M1071.500 465.500V559l-73 71v-94z" fill="#7d7f8f" />
    <g stroke="#0000f0" fill="#0000f0">
      <path d="M521.500 409v-22M521.500 409l9 2.500" stroke="#000080" />
      <path d="m521.500 384 1.500 4h-3zM534 412.500l-5 .5 1-3z" />
      <path d="m518 406 7 7M525 406l-7 7M517 409.500h8" />
    </g>
  </svg>
);

const Triad = () => (
  <svg width="60" height="62" viewBox="0 0 60 62" fill="none" className="block" aria-hidden="true">
    <path d="M25 37V16" stroke="#146018" strokeWidth="3.500" />
    <path d="m25 12 4 7c-2 2-6 2-8 0z" fill="#2c8c30" stroke="#0a4810" />
    <path d="m25 37 18 4.500" stroke="#c01818" strokeWidth="3.500" />
    <path d="m51 44-9 2 1.500-8z" fill="#f06060" stroke="#b01010" />
    <path d="m25 37-8 6" stroke="#1414a0" strokeWidth="3.500" />
    <path d="m11 48 1.500-6 3-1 3.500 5-3 4z" fill="#1818d0" stroke="#1010a0" />
    <path d="M22 2l3 4 3-4M25 6v5" stroke="#109018" />
    <path d="m52 40 5 9M57 40l-5 9" stroke="#f01010" />
    <path d="M7 49h4.500L7 57h5" stroke="#1010f0" />
  </svg>
);

function TaskPane() {
  const [open, setOpen] = useState("ball");
  return (
    <div className="absolute top-[60px] right-0 flex flex-col">
      {["home", "library", "folder", "palette", "ball", "props"].map((name) => (
        <button
          key={name}
          type="button"
          aria-label={name}
          onClick={() => setOpen(name)}
          className={`flex h-6 w-[23px] items-center justify-center rounded-l border border-r-0 border-[#6c7086] ${open === name ? "bg-[#eef0f6]" : "bg-[#b5b8ca]"}`}
        >
          {icons[name]}
        </button>
      ))}
    </div>
  );
}

function BottomTabs() {
  return (
    <div className="flex h-4 border-t border-black bg-[#e1e4ed] font-['Liberation_Sans',sans-serif] text-xs leading-[13px] text-black">
      <div className="flex pr-1 pl-px">
        {["M3 3v8M10 3v8L5 7z", "M9 3v8L4 7z", "M5 3v8l5-4z", "M10 3v8M4 3v8l5-4z"].map((d) => (
          <button key={d} type="button" aria-label="Mover hoja" className="border border-[#8c90a4] bg-[#a6a9bc]">
            <svg width="14" height="13" viewBox="0 0 14 14" aria-hidden="true"><path d={d} fill="#80849a" stroke="#80849a" /></svg>
          </button>
        ))}
      </div>
      <button type="button" className="h-3.5 w-[62px] border-r-2 border-b-2 border-[#5a5e74] bg-[#ced1df] font-bold">Modelo</button>
      <button type="button" className="h-3.5 w-[158px] border-r-2 border-b-2 border-[#5a5e74] bg-[#b5b8ca] pl-2 text-left whitespace-nowrap">Estudio de movimiento 1</button>
    </div>
  );
}

export default function App() {
  return (
    <div className="flex min-h-screen flex-col bg-[#0b1024] px-px pt-px font-['DejaVu_Sans_Condensed','DejaVu_Sans',sans-serif] text-[11px]">
      <div className="flex flex-1 flex-col rounded-t-md border-t border-[#c4d6ea] bg-linear-to-b from-[#c9dbee] from-20% to-[#93b8e0] to-40% px-1.5 pb-px">
        <div className="h-[5px] bg-linear-to-r from-[#a9c2de] via-[#2c5f9e] via-30% to-[#3d6ea8]" />
        <div className="flex flex-1 flex-col border border-[#4b5068]">
          <TitleBar />
          <Ribbon />
          <div className="flex flex-1">
            <div className="flex min-w-0 flex-1 flex-col">
              <main className="relative flex flex-1 flex-col bg-linear-to-b from-[#bdbdbd] to-white">
                <CommandTabs />
                <ViewToolbar />
                <div className="flex flex-1">
                  <FeatureTree />
                  <div className="relative flex flex-1 flex-col justify-end">
                    <Model />
                    <div className="relative pl-[15px]">
                      <Triad />
                      <p className="-ml-1 pt-4 font-['DejaVu_Sans',sans-serif] font-bold leading-[18px] text-[#2c2c66]">*Trimétrica</p>
                    </div>
                  </div>
                </div>
                <div className="absolute top-2 right-2.5 flex gap-2.5">
                  <button type="button" aria-label="Minimizar documento"><WinIcon type="min" color="#4c4e60" /></button>
                  <button type="button" aria-label="Restaurar documento"><WinIcon type="restore" color="#4c4e60" /></button>
                  <button type="button" aria-label="Cerrar documento"><WinIcon type="close" color="#4c4e60" /></button>
                </div>
                <TaskPane />
              </main>
              <BottomTabs />
            </div>
            <nav className="flex w-[30px] flex-col border-l border-[#6c7086] bg-linear-to-b from-[#dfe2ee] from-30% to-[#b6bacd]">
              <div className="flex h-[137px] flex-col items-center gap-[7px] border-b-2 border-[#8c90a4] bg-linear-to-r from-[#eff1f8] to-[#b9bdd0] pt-1.5 pr-0.5">
                <div className="mb-[3px] w-[22px] border-t-2 border-dotted border-[#8c90a4]" />
                {["ext1", "ext2", "ext3", "ext4", "ext5"].map((name) => (
                  <button key={name} type="button" aria-label={name}>{icons[name]}</button>
                ))}
              </div>
            </nav>
          </div>
          <footer className="flex h-[18px] items-center border-t border-[#5a5e74] bg-linear-to-b from-[#cdd0df] to-[#b3b6ca] pl-0.5 font-['Open_Sans',sans-serif] text-black">
            <span>SolidWorks Premium 2011 x64 Edition</span>
            <div className="mr-20 ml-auto flex h-4 items-center gap-[7px]">
              <span className="h-full w-px bg-[#dfe1ea]" />
              <span className="h-full border-l border-[#dfe1ea] pr-1.5 pl-1">Editando Pieza</span>
              <span className="h-full w-px bg-[#dfe1ea]" />
              <span className="h-full w-px bg-[#dfe1ea]" />
            </div>
            <button type="button" aria-label="Etiquetas" className="mr-5">{icons.tag}</button>
            <svg width="10" height="12" viewBox="0 0 10 12" className="mr-1" aria-hidden="true">
              <path d="M8 2h2v2H8zM4 6h2v2H4zM8 6h2v2H8zM0 10h2v2H0zM4 10h2v2H4zM8 10h2v2H8z" fill="#eef0f6" />
            </svg>
          </footer>
        </div>
      </div>
    </div>
  );
}
